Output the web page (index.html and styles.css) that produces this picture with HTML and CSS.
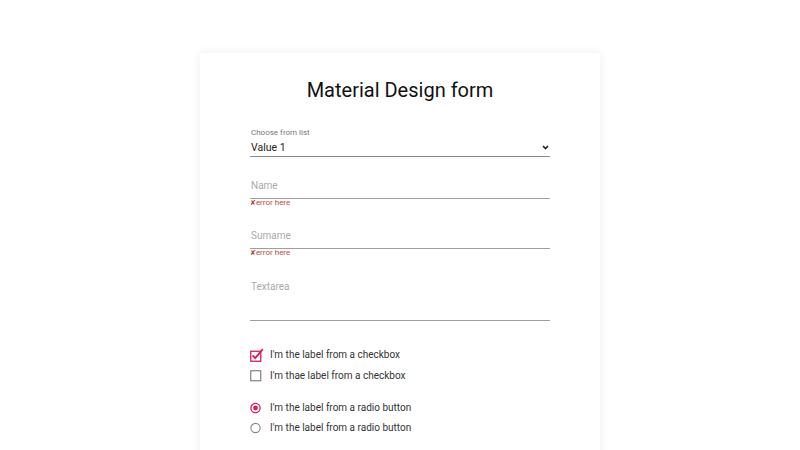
FILE: index.html
```html
<!DOCTYPE html>
<html lang="en">
<head>
<meta charset="utf-8">
<title>Material Design form</title>
<link rel="stylesheet" href="styles.css">
</head>
<body>
<main class="card">
  <h1 class="title">Material Design form</h1>

  <div class="field field-select">
    <div class="small-label">Choose from list</div>
    <div class="select">
      <span>Value 1</span>
      <svg class="chevron" width="7" height="5" viewBox="0 0 7 5"><polyline points="1,1 3.5,3.6 6,1" fill="none" stroke="#222" stroke-width="1.6"/></svg>
    </div>
  </div>

  <div class="field field-name">
    <div class="input">Name</div>
    <div class="error"><span class="x">✘</span>error here</div>
  </div>

  <div class="field field-surname">
    <div class="input">Surname</div>
    <div class="error"><span class="x">✘</span>error here</div>
  </div>

  <div class="field field-textarea">
    <div class="input textarea">Textarea</div>
  </div>

  <div class="group group-check">
    <div class="row">
      <span class="slot">
        <svg width="14" height="14" viewBox="0 0 14 14"><rect x="0.75" y="3.25" width="10" height="10" fill="none" stroke="#d81b60" stroke-width="1.3"/><polyline points="2.6,7.4 5.2,10.2 12.8,1.2" fill="none" stroke="#d81b60" stroke-width="1.8"/></svg>
      </span>
      <span class="label">I'm the label from a checkbox</span>
    </div>
    <div class="row">
      <span class="slot">
        <svg width="14" height="14" viewBox="0 0 14 14"><rect x="0.75" y="1.75" width="10" height="10" fill="none" stroke="#777" stroke-width="1.1"/></svg>
      </span>
      <span class="label">I'm thae label from a checkbox</span>
    </div>
  </div>

  <div class="group group-radio">
    <div class="row row-radio">
      <span class="slot">
        <svg width="14" height="14" viewBox="0 0 14 14"><circle cx="5.5" cy="7" r="4.6" fill="none" stroke="#d81b60" stroke-width="1.3"/><circle cx="5.5" cy="7" r="2.4" fill="#d81b60"/></svg>
      </span>
      <span class="label">I'm the label from a radio button</span>
    </div>
    <div class="row row-radio">
      <span class="slot">
        <svg width="14" height="14" viewBox="0 0 14 14"><circle cx="5.5" cy="7" r="4.6" fill="none" stroke="#888" stroke-width="1.1"/></svg>
      </span>
      <span class="label">I'm the label from a radio button</span>
    </div>
  </div>
</main>
</body>
</html>
```

FILE: styles.css
```css
html, body {
  margin: 0;
  padding: 0;
  background: #ffffff;
}

body {
  font-family: Roboto, "Liberation Sans", Arial, sans-serif;
  color: #333;
}

.card {
  width: 300px;
  margin: 53px auto 0;
  padding: 25px 50px 40px;
  background: #fff;
  box-shadow: 0 0 10px rgba(0, 0, 0, 0.07);
}

.title {
  margin: 0;
  font-size: 20px;
  line-height: 24px;
  font-weight: 400;
  color: #111;
  text-align: center;
}

.field-select {
  margin-top: 26px;
}

.small-label {
  font-size: 8px;
  line-height: 10px;
  padding-left: 1px;
  color: #777;
}

.select {
  display: flex;
  justify-content: space-between;
  align-items: center;
  height: 17px;
  margin-top: 1px;
  padding-left: 1px;
  border-bottom: 1px solid #8a8a8a;
  font-size: 10.5px;
  color: #222;
}

.chevron {
  margin-right: 1px;
}

.input {
  font-size: 10px;
  line-height: 14px;
  padding-left: 1px;
  padding-bottom: 5px;
  border-bottom: 1px solid #9e9e9e;
  color: #aaa;
}

.textarea {
  height: 35px;
}

.field-name {
  margin-top: 22px;
}

.field-surname {
  margin-top: 23px;
}

.field-textarea {
  margin-top: 23.5px;
}

.error {
  font-size: 8px;
  line-height: 7px;
  height: 7px;
  color: #b8484a;
}

.error .x {
  font-family: "DejaVu Sans", sans-serif;
  font-size: 7px;
  color: #c0392b;
}

.group-check {
  margin-top: 23.5px;
}

.group-radio {
  margin-top: 11.5px;
}

.row {
  display: flex;
  align-items: center;
  height: 21px;
}

.row-radio {
  height: 20px;
}

.slot {
  display: flex;
  align-items: center;
  width: 20px;
  flex: none;
}

.label {
  font-size: 10px;
  color: #333;
}
```
